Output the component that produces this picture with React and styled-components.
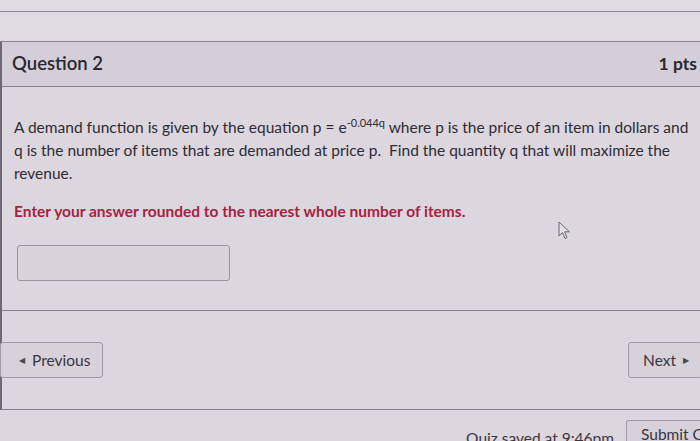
import React from 'react';
import styled, { createGlobalStyle } from 'styled-components';

const GlobalStyle = createGlobalStyle`
  html, body {
    margin: 0;
    padding: 0;
    background: #dcd7df;
  }
  body {
    font-family: 'Lato', 'Liberation Sans', sans-serif;
    color: #2e2b33;
    overflow: hidden;
  }
`;

const Page = styled.div`
  width: 700px;
  height: 441px;
  overflow: hidden;
  display: flex;
  flex-direction: column;
`;

const TopStrip = styled.div`
  height: ${p => p.h}px;
  flex-shrink: 0;
  background: ${p => p.bg || '#dedae1'};
  border-bottom: 1px solid #88838e;
`;

const Card = styled.div`
  border-left: 2px solid #6e6975;
  display: flex;
  flex-direction: column;
`;

const Header = styled.div`
  height: 45px;
  box-sizing: border-box;
  display: flex;
  align-items: center;
  justify-content: space-between;
  padding: 0 3px 2px 10px;
  background: #d4ced8;
  border-bottom: 1px solid #86818c;
`;

const Title = styled.h2`
  margin: 0;
  font-size: 18.5px;
  font-weight: 600;
  color: #2a2730;
`;

const Points = styled.span`
  font-size: 17.5px;
  font-weight: 700;
  color: #2a2730;
`;

const Body = styled.div`
  height: 224px;
  padding: 29px 0 0 12px;
  box-sizing: border-box;
  border-bottom: 1px solid #86818c;
  position: relative;
`;

const Prompt = styled.p`
  margin: 0;
  font-size: 15.5px;
  line-height: 23px;
  color: #2e2b33;
`;

const Sup = styled.sup`
  font-size: 11px;
  vertical-align: 6px;
  line-height: 0;
`;

const Instruction = styled.p`
  margin: 17px 0 0;
  font-size: 15.5px;
  font-weight: 700;
  color: #a8213f;
`;

const AnswerInput = styled.input`
  display: block;
  margin: 25px 0 0 3px;
  width: 213px;
  height: 36px;
  box-sizing: border-box;
  border: 1px solid #9a959f;
  border-radius: 3px;
  background: #d9d4dc;
  outline: none;
`;

const Cursor = styled.svg`
  position: absolute;
  left: 556px;
  top: 134px;
`;

const Nav = styled.div`
  height: 98px;
  display: flex;
  align-items: center;
  justify-content: space-between;
  border-bottom: 1px solid #86818c;
`;

const NavButton = styled.button`
  height: 36px;
  display: flex;
  align-items: center;
  gap: 7px;
  padding: ${p => (p.left ? '0 12px 0 18px' : '0 12px 0 14px')};
  margin: ${p => (p.left ? '0 0 0 -2px' : '0 -2px 0 0')};
  background: #d7d1da;
  border: 1px solid #a09ba6;
  border-radius: 3px;
  font-family: 'Lato', 'Liberation Sans', sans-serif;
  font-size: 15.5px;
  color: #3a3640;
`;

const Arrow = styled.span`
  font-size: 8px;
  color: #4a4650;
`;

const Footer = styled.div`
  flex: 1;
  display: flex;
  align-items: flex-end;
  justify-content: flex-end;
  gap: 12px;
  padding-top: 10px;
`;

const Saved = styled.span`
  font-size: 15.5px;
  color: #3a3640;
  margin-bottom: -6px;
`;

const SubmitButton = styled.button`
  width: 80px;
  height: 21px;
  margin-right: -6px;
  padding: 4px 0 0 14px;
  text-align: left;
  overflow: hidden;
  white-space: nowrap;
  background: #d7d1da;
  border: 1px solid #a09ba6;
  border-bottom: none;
  border-radius: 3px 0 0 0;
  font-family: 'Lato', 'Liberation Sans', sans-serif;
  font-size: 15.5px;
  color: #3a3640;
`;

export default function App() {
  return (
    <>
      <GlobalStyle />
      <Page>
        <TopStrip h={11} bg="#e0dce3" />
        <TopStrip h={29} />
        <Card>
          <Header>
            <Title>Question 2</Title>
            <Points>1 pts</Points>
          </Header>
          <Body>
            <Prompt>
              A demand function is given by the equation p = e<Sup>-0.044q</Sup> where p is the price of an item in dollars and q is the number of items that are demanded at price p.&nbsp; Find the quantity q that will maximize the revenue.
            </Prompt>
            <Instruction>Enter your answer rounded to the nearest whole number of items.</Instruction>
            <AnswerInput type="text" aria-label="answer" />
            <Cursor width="14" height="20" viewBox="0 0 14 20">
              <path d="M1 1 L1 15 L4.5 11.5 L7 17.5 L9 16.6 L6.6 10.8 L11.5 10.8 Z" fill="#e4e0e6" stroke="#6a6670" strokeWidth="1" strokeLinejoin="round" />
            </Cursor>
          </Body>
          <Nav>
            <NavButton left>
              <Arrow>◀</Arrow>Previous
            </NavButton>
            <NavButton>
              Next<Arrow>▶</Arrow>
            </NavButton>
          </Nav>
        </Card>
        <Footer>
          <Saved>Quiz saved at 9:46pm</Saved>
          <SubmitButton>Submit Quiz</SubmitButton>
        </Footer>
      </Page>
    </>
  );
}
